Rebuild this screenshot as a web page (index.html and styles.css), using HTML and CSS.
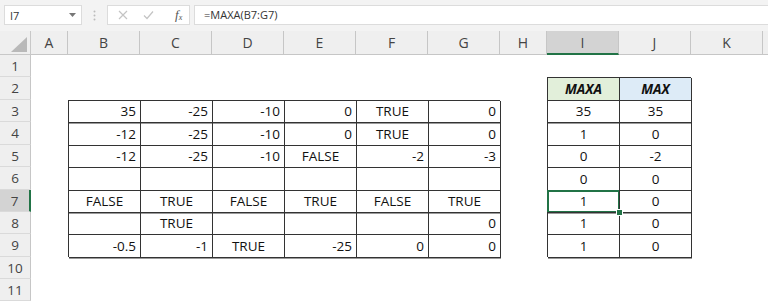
FILE: index.html
```html
<!DOCTYPE html>
<html lang="en">
<head>
    <meta charset="UTF-8">
    <title>MAXA vs MAX</title>
    <link rel="stylesheet" href="styles.css">
</head>
<body>
    <div class="topbar">
        <div class="namebox">
            <span>I7</span>
            <svg class="caret" width="7" height="4" viewBox="0 0 7 4"><path d="M0 0h7L3.5 4z" fill="#777"/></svg>
        </div>
        <div class="grip">
            <svg width="3" height="11" viewBox="0 0 3 11"><circle cx="1.5" cy="1.5" r="1" fill="#bbb"/><circle cx="1.5" cy="5.5" r="1" fill="#bbb"/><circle cx="1.5" cy="9.5" r="1" fill="#bbb"/></svg>
        </div>
        <div class="fxbox">
            <svg width="10" height="10" viewBox="0 0 10 10"><path d="M1 1l8 8M9 1l-8 8" stroke="#c4c4c4" stroke-width="1.2"/></svg>
            <svg width="11" height="10" viewBox="0 0 11 10"><path d="M1 5.5l3 3L10 1.5" stroke="#c4c4c4" stroke-width="1.2" fill="none"/></svg>
            <span class="fx">f<sub>x</sub></span>
        </div>
        <div class="formula">=MAXA(B7:G7)</div>
    </div>

    <div class="sheet">
        <div class="corner">
            <svg width="16" height="15" viewBox="0 0 16 15"><path d="M16 0v15H0z" fill="#b9b9b9"/></svg>
        </div>
        <div class="colhead">A</div>
        <div class="colhead">B</div>
        <div class="colhead">C</div>
        <div class="colhead">D</div>
        <div class="colhead">E</div>
        <div class="colhead">F</div>
        <div class="colhead">G</div>
        <div class="colhead">H</div>
        <div class="colhead active">I</div>
        <div class="colhead">J</div>
        <div class="colhead">K</div>
        <div class="colhead blank"></div>

        <div class="rowhead">1</div>
        <div class="rowhead">2</div>
        <div class="rowhead">3</div>
        <div class="rowhead">4</div>
        <div class="rowhead">5</div>
        <div class="rowhead">6</div>
        <div class="rowhead active">7</div>
        <div class="rowhead">8</div>
        <div class="rowhead">9</div>
        <div class="rowhead">10</div>
        <div class="rowhead">11</div>

        <div class="data data-left">
            <div class="cell num">35</div>
            <div class="cell num">-25</div>
            <div class="cell num">-10</div>
            <div class="cell num">0</div>
            <div class="cell bool">TRUE</div>
            <div class="cell num">0</div>

            <div class="cell num gap">-12</div>
            <div class="cell num gap">-25</div>
            <div class="cell num gap">-10</div>
            <div class="cell num gap">0</div>
            <div class="cell bool gap">TRUE</div>
            <div class="cell num gap">0</div>

            <div class="cell num">-12</div>
            <div class="cell num">-25</div>
            <div class="cell num">-10</div>
            <div class="cell bool">FALSE</div>
            <div class="cell num">-2</div>
            <div class="cell num">-3</div>

            <div class="cell"></div>
            <div class="cell"></div>
            <div class="cell"></div>
            <div class="cell"></div>
            <div class="cell"></div>
            <div class="cell"></div>

            <div class="cell bool">FALSE</div>
            <div class="cell bool">TRUE</div>
            <div class="cell bool">FALSE</div>
            <div class="cell bool">TRUE</div>
            <div class="cell bool">FALSE</div>
            <div class="cell bool">TRUE</div>

            <div class="cell gap"></div>
            <div class="cell bool gap">TRUE</div>
            <div class="cell gap"></div>
            <div class="cell gap"></div>
            <div class="cell gap"></div>
            <div class="cell num gap">0</div>

            <div class="cell num">-0.5</div>
            <div class="cell num">-1</div>
            <div class="cell bool">TRUE</div>
            <div class="cell num">-25</div>
            <div class="cell num">0</div>
            <div class="cell num">0</div>
        </div>

        <div class="data data-right">
            <div class="cell head maxa">MAXA</div>
            <div class="cell head max">MAX</div>

            <div class="cell mid">35</div>
            <div class="cell mid">35</div>

            <div class="cell mid gap">1</div>
            <div class="cell mid gap">0</div>

            <div class="cell mid">0</div>
            <div class="cell mid">-2</div>

            <div class="cell mid">0</div>
            <div class="cell mid">0</div>

            <div class="cell mid selected">1<span class="handle"></span></div>
            <div class="cell mid">0</div>

            <div class="cell mid gap">1</div>
            <div class="cell mid gap">0</div>

            <div class="cell mid">1</div>
            <div class="cell mid">0</div>
        </div>
    </div>
</body>
</html>
```

FILE: styles.css
```css
body {
    margin: 0;
    background-color: #fff;
    font-family: "Open Sans", Arial, sans-serif;
    overflow: hidden;
}

/* formula bar */
.topbar {
    display: flex;
    height: 31px;
    box-sizing: border-box;
    padding: 5px 0 0 4px;
    background-color: #f3f3f3;
}
.namebox, .fxbox, .formula {
    height: 20px;
    box-sizing: border-box;
    background-color: #fff;
    border: 1px solid #dcdcdc;
    font-size: 11px;
    color: #333;
}
.namebox {
    width: 78px;
    display: flex;
    align-items: center;
    justify-content: space-between;
    padding: 0 5px 0 5px;
}
.grip {
    width: 25px;
    display: flex;
    justify-content: center;
    padding-top: 5px;
}
.fxbox {
    width: 83px;
    display: flex;
    align-items: center;
    gap: 15px;
    padding-left: 10px;
}
.fx {
    font-family: "Liberation Serif", serif;
    font-style: italic;
    font-size: 13px;
    color: #555;
    margin-left: 6px;
}
.fx sub {
    font-size: 8px;
    vertical-align: -1px;
}
.formula {
    flex: 1;
    margin-left: 4px;
    border-right: none;
    padding-left: 9px;
    line-height: 18px;
}

/* grid */
.sheet {
    display: grid;
    grid-template-columns: 31px 37px repeat(6, 72px) 47px 72px 72px 72px 1fr;
    grid-template-rows: 24px 22px 23px 22px 23px 22px 23px 22px 22px 23px 22px 22px;
}
.corner {
    grid-row: 1;
    background-color: #efefef;
    border-right: 1px solid #c8c8c8;
    border-bottom: 1px solid #c8c8c8;
    display: flex;
    align-items: flex-end;
    justify-content: flex-end;
    padding: 0 3px 2px 0;
}
.colhead {
    grid-row: 1;
    background-color: #efefef;
    border-right: 1px solid #c6c6c6;
    border-bottom: 1px solid #c6c6c6;
    font-size: 14px;
    color: #444;
    text-align: center;
    line-height: 23px;
}
.colhead.blank {
    border-right: none;
}
.colhead.active {
    background-color: #d3d3d3;
    border-bottom: 2px solid #217346;
}
.rowhead {
    grid-column: 1;
    background-color: #efefef;
    border-right: 1px solid #c6c6c6;
    border-bottom: 1px solid #dadada;
    font-size: 13.5px;
    color: #444;
    text-align: center;
    line-height: 22px;
}
.rowhead.active {
    background-color: #d3d3d3;
    border-right: 2px solid #217346;
}

/* data tables */
.data {
    display: grid;
    box-shadow: 1px 1px 0 #333, 1px 2px 0 #9a9a9a;
    font-size: 13.5px;
    color: #111;
}
.data-left {
    grid-column: 3 / 9;
    grid-row: 4 / 11;
    grid-template-columns: repeat(6, 1fr);
    grid-template-rows: 22px 23px 22px 23px 22px 22px 23px;
}
.data-right {
    grid-column: 10 / 12;
    grid-row: 3 / 11;
    grid-template-columns: repeat(2, 1fr);
    grid-template-rows: 23px 22px 23px 22px 23px 22px 22px 23px;
}
.cell {
    border-left: 1px solid #333;
    border-top: 1px solid #333;
    display: flex;
    align-items: flex-end;
    padding: 0 4px 1px 4px;
    line-height: 19px;
    white-space: nowrap;
    position: relative;
}
.cell.gap {
    box-shadow: inset 0 1px 0 #9a9a9a;
}
.num {
    justify-content: flex-end;
}
.bool, .mid, .head {
    justify-content: center;
}
.head {
    font-weight: bold;
    font-style: italic;
}
.maxa {
    background-color: #e2efda;
}
.max {
    background-color: #ddebf7;
}
.selected::after {
    content: "";
    position: absolute;
    left: -1px;
    top: -1px;
    right: -1px;
    bottom: -1px;
    border: 2px solid #217346;
}
.handle {
    position: absolute;
    right: -4px;
    bottom: -4px;
    width: 5px;
    height: 5px;
    background-color: #217346;
    border: 1px solid #fff;
    z-index: 1;
}
```
